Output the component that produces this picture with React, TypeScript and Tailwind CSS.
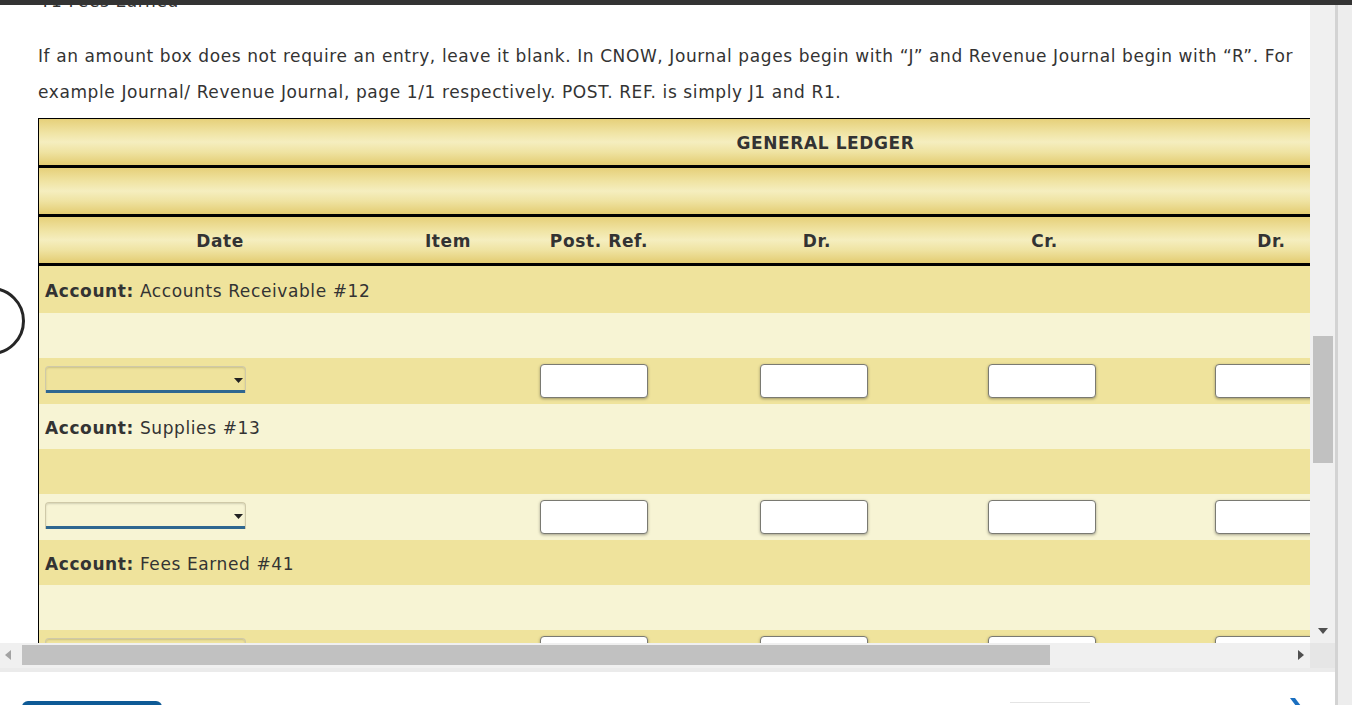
import type { ReactNode } from "react";

const cols = "grid grid-cols-[362px_94px_208px_228px_227px_227px_228px]";
const headers = ["Date", "Item", "Post. Ref.", "Dr.", "Cr.", "Dr.", "Cr."];
const band = "bg-[linear-gradient(to_bottom,#e6d07a_0%,#f0e4a4_30%,#f5eebf_50%,#efe3a2_72%,#e3cc72_100%)]";

function AmountBox() {
  return (
    <div className="h-[34px] w-[108px] rounded-[4px] border border-[#7a7a72] bg-white shadow-[0_1px_3px_rgba(0,0,0,0.35)]" />
  );
}

function DateSelect() {
  return (
    <div className="relative ml-[6px] -mt-[3px] h-[27px] w-[201px] rounded-t-[4px] border border-b-0 border-[#cfc9a8] shadow-[inset_0_1px_2px_rgba(0,0,0,0.15)]">
      <div className="absolute bottom-0 left-0 right-0 h-[3px] bg-[#2f6790]" />
      <svg className="absolute right-[2px] top-[11px]" width="9" height="5" viewBox="0 0 9 5">
        <path d="M0 0h9L4.5 5z" fill="#222" />
      </svg>
    </div>
  );
}

function EntryRow({ tone, h }: { tone: string; h: string }) {
  return (
    <div className={`${cols} ${tone} ${h} items-center`}>
      <div>
        <DateSelect />
      </div>
      <div />
      <div className="pl-[45px]">
        <AmountBox />
      </div>
      <div className="pl-[57px]">
        <AmountBox />
      </div>
      <div className="pl-[57px]">
        <AmountBox />
      </div>
      <div className="pl-[57px]">
        <AmountBox />
      </div>
      <div className="pl-[57px]">
        <AmountBox />
      </div>
    </div>
  );
}

function AccountRow({ tone, h, name }: { tone: string; h: string; name: string }) {
  return (
    <div className={`${tone} ${h} flex items-center pl-[6px] pt-[4px]`}>
      <span className="font-bold">Account:</span>
      <span className="ml-[6px]">{name}</span>
    </div>
  );
}

function Blank({ tone, h }: { tone: string; h: string }) {
  return <div className={`${tone} ${h}`} />;
}

function HeaderBand({ children }: { children?: ReactNode }) {
  return <div className={`${band} h-[49px] border-b-[3px] border-black pt-[4px]`}>{children}</div>;
}

const dark = "bg-[#efe39c]";
const light = "bg-[#f7f4d4]";

export default function App() {
  return (
    <div className="relative h-[705px] w-[1352px] overflow-hidden bg-white font-['DejaVu_Sans',Verdana,sans-serif] text-[17px] tracking-[0.6px] text-[#333]">
      <div className="h-[5px] bg-[#333]" />
      <div className="flex h-[700px]">
        <div className="flex w-[1335px] flex-col">
          <div className="flex h-[638px]">
            <div className="w-[1310px] overflow-hidden">
              <div className="pl-[38px]">
                <div className="-mt-[14px] h-[20px] pl-[2px] leading-[20px]">Y1 Fees Earned</div>
                <p className="mt-[27px] whitespace-nowrap leading-[36px]">
                  If an amount box does not require an entry, leave it blank. In CNOW, Journal pages begin with “J” and Revenue Journal begin with “R”. For
                  <br />
                  example Journal/ Revenue Journal, page 1/1 respectively. POST. REF. is simply J1 and R1.
                </p>
                <div className="mt-[8px] w-[1574px] border-l border-t border-black">
                  <HeaderBand>
                    <div className="flex h-full items-center justify-center font-bold">GENERAL LEDGER</div>
                  </HeaderBand>
                  <HeaderBand />
                  <HeaderBand>
                    <div className={`${cols} h-full items-center font-bold`}>
                      {headers.map((t, i) => (
                        <div key={i} className="text-center">
                          {t}
                        </div>
                      ))}
                    </div>
                  </HeaderBand>
                  <AccountRow tone={dark} h="h-[47px]" name="Accounts Receivable #12" />
                  <Blank tone={light} h="h-[45px]" />
                  <EntryRow tone={dark} h="h-[46px]" />
                  <AccountRow tone={light} h="h-[45px]" name="Supplies #13" />
                  <Blank tone={dark} h="h-[45px]" />
                  <EntryRow tone={light} h="h-[46px]" />
                  <AccountRow tone={dark} h="h-[45px]" name="Fees Earned #41" />
                  <Blank tone={light} h="h-[45px]" />
                  <EntryRow tone={dark} h="h-[46px]" />
                </div>
              </div>
            </div>
            {/* vertical scrollbar */}
            <div className="relative w-[25px] bg-[#f0f0f0]">
              <div className="absolute left-[3px] top-[331px] h-[127px] w-[20px] bg-[#c1c1c1]" />
              <svg className="absolute bottom-[9px] left-[8px]" width="10" height="6" viewBox="0 0 10 6">
                <path d="M0 0h10L5 6z" fill="#505050" />
              </svg>
            </div>
          </div>
          {/* horizontal scrollbar */}
          <div className="flex h-[25px]">
            <div className="relative w-[1310px] bg-[#f0f0f0]">
              <svg className="absolute left-[5px] top-[7px]" width="6" height="10" viewBox="0 0 6 10">
                <path d="M6 0v10L0 5z" fill="#a3a3a3" />
              </svg>
              <div className="absolute left-[22px] top-[2px] h-[20px] w-[1028px] bg-[#c1c1c1]" />
              <svg className="absolute right-[6px] top-[7px]" width="6" height="10" viewBox="0 0 6 10">
                <path d="M0 0v10l6-5z" fill="#505050" />
              </svg>
            </div>
            <div className="w-[25px] bg-[#e6e6e6]" />
          </div>
          <div className="h-[4px] bg-[#ebebeb]" />
          <div className="relative flex-1 bg-white">
            <div className="absolute left-[22px] top-[29px] h-[20px] w-[140px] rounded-t-[6px] bg-[#0e5a96]" />
            <div className="absolute left-[1010px] top-[30px] h-[1px] w-[80px] bg-[#e4e4e4]" />
            <svg className="absolute left-[1288px] top-[26px]" width="14" height="8" viewBox="0 0 14 8">
              <path d="M2 0h5l6 8H8z" fill="#1a6fc0" />
            </svg>
          </div>
        </div>
        <div className="w-[17px] border-l-[3px] border-[#d3d3d3] bg-[#ededed]" />
      </div>
      <div className="absolute left-[-43px] top-[287px] h-[68px] w-[68px] rounded-full border-[3px] border-[#262626]" />
    </div>
  );
}
